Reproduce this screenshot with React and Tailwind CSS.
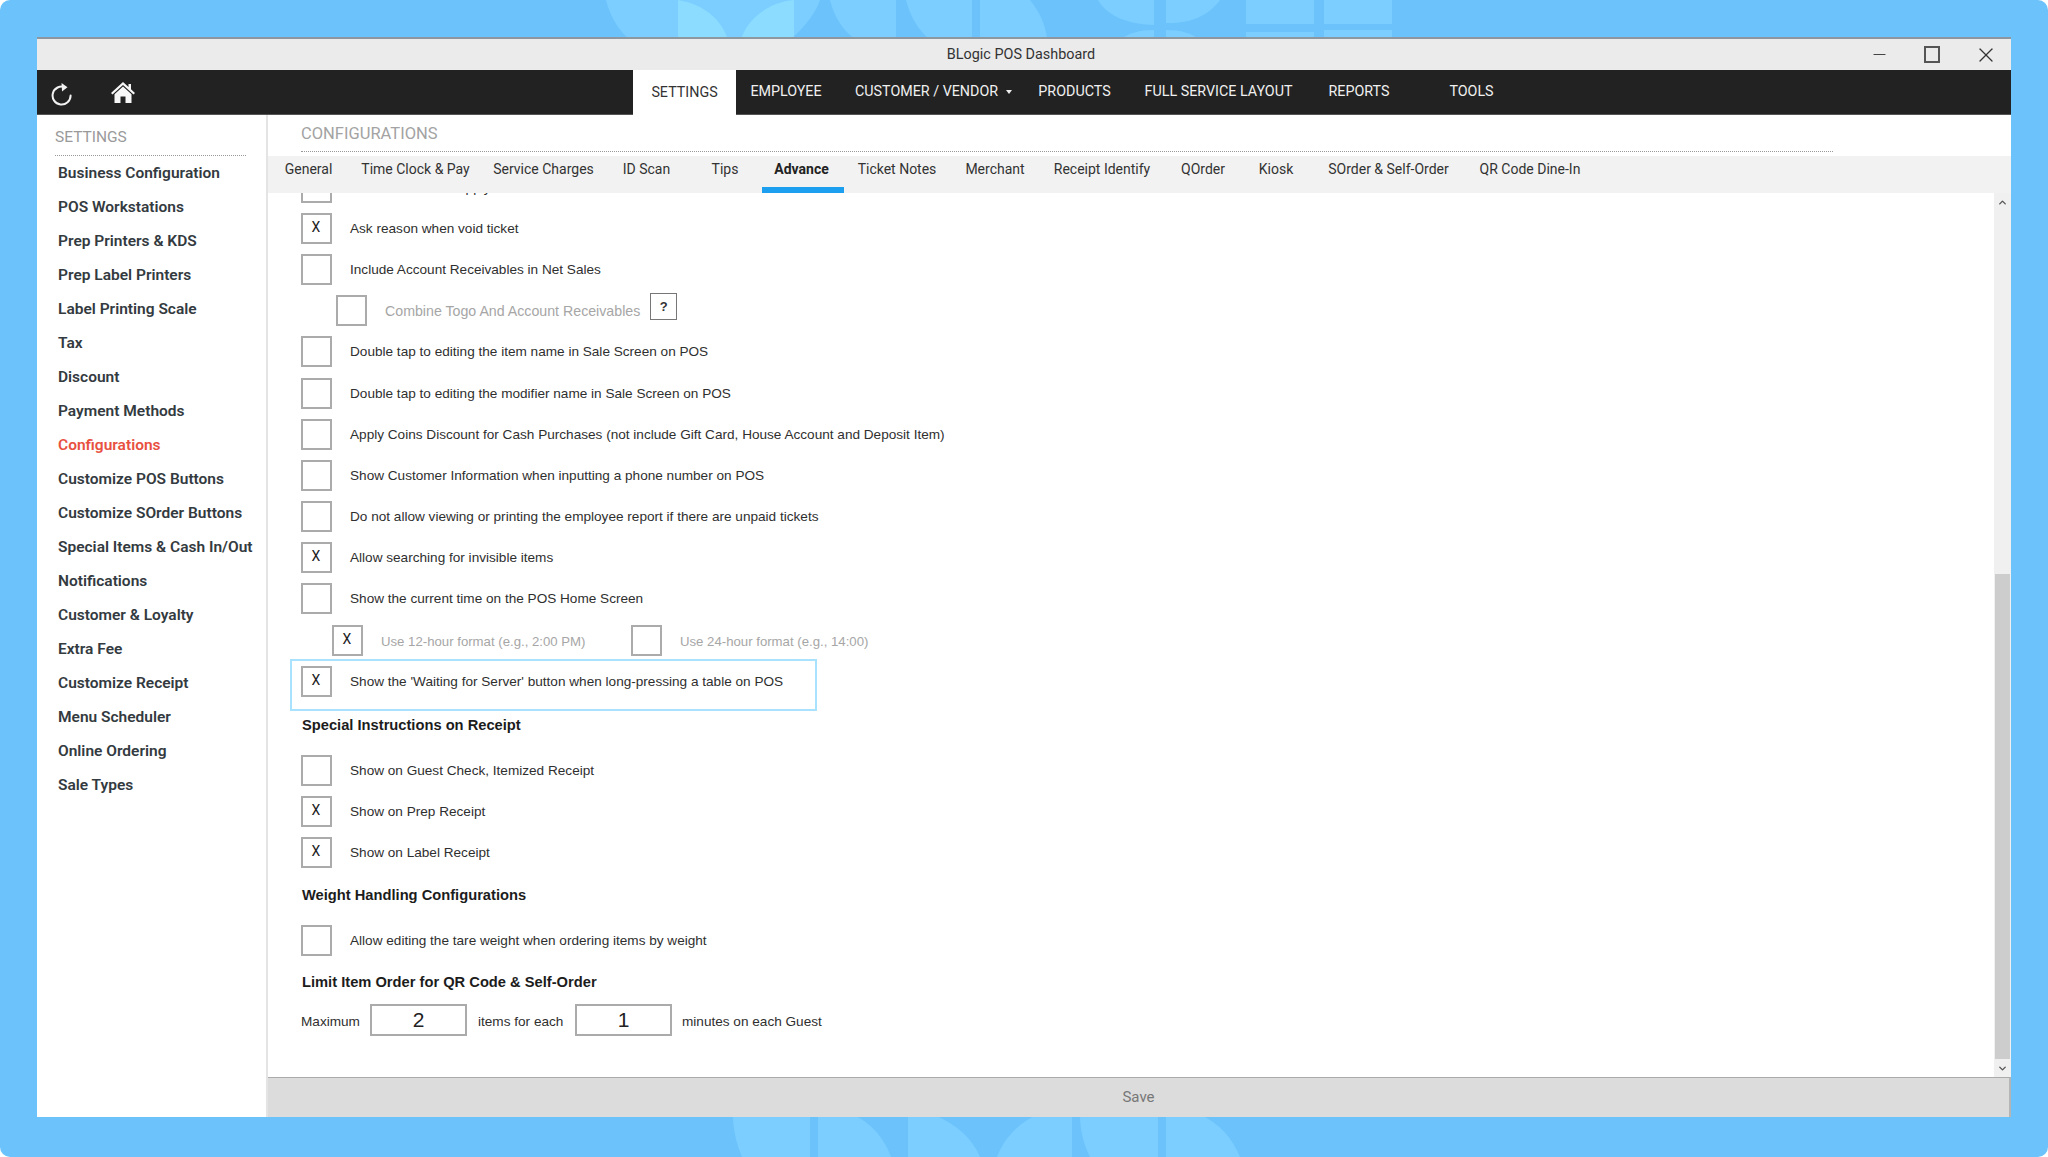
import React from "react";
import { ChevronUp, ChevronDown, Minus, X } from "lucide-react";

const navItems = [
  { label: "EMPLOYEE", cls: "w-[100px] justify-center" },
  { label: "CUSTOMER / VENDOR", cls: "w-[184px] pl-[19px]", caret: true },
  { label: "PRODUCTS", cls: "w-[109px] justify-center" },
  { label: "FULL SERVICE LAYOUT", cls: "w-[179px] justify-center" },
  { label: "REPORTS", cls: "w-[102px] justify-center" },
  { label: "TOOLS", cls: "w-[123px] justify-center" },
];

const sideItems = [
  "Business Configuration",
  "POS Workstations",
  "Prep Printers & KDS",
  "Prep Label Printers",
  "Label Printing Scale",
  "Tax",
  "Discount",
  "Payment Methods",
  "Configurations",
  "Customize POS Buttons",
  "Customize SOrder Buttons",
  "Special Items & Cash In/Out",
  "Notifications",
  "Customer & Loyalty",
  "Extra Fee",
  "Customize Receipt",
  "Menu Scheduler",
  "Online Ordering",
  "Sale Types",
];

const tabs = [
  { label: "General", cls: "w-[81px]" },
  { label: "Time Clock & Pay", cls: "w-[133px]" },
  { label: "Service Charges", cls: "w-[123px]" },
  { label: "ID Scan", cls: "w-[83px]" },
  { label: "Tips", cls: "w-[74px]" },
  { label: "Advance", cls: "w-[82px] pr-[3px]", active: true },
  { label: "Ticket Notes", cls: "w-[106px]" },
  { label: "Merchant", cls: "w-[90px]" },
  { label: "Receipt Identify", cls: "w-[124px]" },
  { label: "QOrder", cls: "w-[78px]" },
  { label: "Kiosk", cls: "w-[68px]" },
  { label: "SOrder & Self-Order", cls: "w-[157px]" },
  { label: "QR Code Dine-In", cls: "w-[126px]" },
];

const Box = ({ checked }) => (
  <div className="w-[31px] h-[31px] shrink-0 border-2 border-[#ababab] bg-white flex items-center justify-center text-[14px] text-[#222] pr-[1px] pb-[2px] font-['Roboto',sans-serif]">
    {checked ? "X" : ""}
  </div>
);

const Row = ({ checked, label }) => (
  <div className="h-[41.2px] flex items-start">
    <Box checked={checked} />
    <span className="ml-[18px] mt-[7px] leading-[18px] text-[13.6px] text-[#2f2f2f]">{label}</span>
  </div>
);

const Heading = ({ cls, children }) => (
  <div className={`flex items-center pl-[1px] font-bold text-[14.7px] text-[#1c1c1c] ${cls}`}>{children}</div>
);

const rows1 = [
  ["Ask reason when void ticket", true],
  ["Include Account Receivables in Net Sales", false],
];

const rows2 = [
  ["Double tap to editing the item name in Sale Screen on POS", false],
  ["Double tap to editing the modifier name in Sale Screen on POS", false],
  ["Apply Coins Discount for Cash Purchases (not include Gift Card, House Account and Deposit Item)", false],
  ["Show Customer Information when inputting a phone number on POS", false],
  ["Do not allow viewing or printing the employee report if there are unpaid tickets", false],
  ["Allow searching for invisible items", true],
  ["Show the current time on the POS Home Screen", false],
];

const Backdrop = () => (
  <svg className="absolute inset-0" width="2048" height="1157" viewBox="0 0 2048 1157">
    <g fill="#7bceff">
      <path d="M606 0C610 16 618 30 630 40H790C806 26 816 12 820 0Z" />
      <path d="M830 0C834 16 842 30 856 40H896V0Z" />
      <path d="M906 0C910 16 918 30 930 40H972V0Z" />
      <path d="M980 0V40H1047C1046 24 1038 10 1030 0Z" />
      <path d="M1098 0C1106 14 1124 24 1154 25V0Z" />
      <path d="M1166 0V23C1192 24 1210 14 1220 0Z" />
      <path d="M1120 40C1128 33 1140 30 1154 30V40Z" />
      <path d="M1166 30C1180 30 1192 33 1200 40H1166Z" />
      <rect x="1246" y="0" width="68" height="24" />
      <rect x="1324" y="0" width="68" height="24" />
      <rect x="1246" y="32" width="68" height="8" />
      <rect x="1324" y="30" width="68" height="10" />
      <path d="M733 1115C733 1130 737 1145 742 1157H810V1115Z" />
      <path d="M818 1115V1157H891C884 1138 872 1124 854 1115Z" />
      <path d="M908 1115V1157H980C972 1138 956 1124 934 1115Z" />
      <path d="M997 1157C1004 1138 1018 1124 1036 1115H1072V1157Z" />
      <path d="M1080 1115C1080 1130 1084 1145 1090 1157H1158V1115Z" />
      <path d="M1166 1115V1157H1240C1232 1138 1220 1124 1201 1115Z" />
    </g>
    <g fill="#8bdcff">
      <path d="M678 0C704 4 722 20 728 40H678Z" />
      <path d="M741 40C746 20 768 2 794 0V40Z" />
    </g>
  </svg>
);

const App = () => {
  return (
    <div className="bg-white w-[2048px] h-[1157px] overflow-hidden font-['Liberation_Sans',Arial,sans-serif]">
      <div className="relative w-[2048px] h-[1157px] rounded-[10px] bg-[#6cc3fb] overflow-hidden pt-[37px] px-[37px]">
        <Backdrop />

        <div className="relative w-[1974px] h-[1080px] bg-white flex flex-col border-t-2 border-[#8d979f]">
          {/* Title bar */}
          <div className="h-[31px] shrink-0 bg-[#ebebeb] flex items-center font-['Roboto',sans-serif]">
            <div className="ml-[907px] w-[154px] text-center text-[14.4px] text-[#333]">BLogic POS Dashboard</div>
            <Minus size={19} strokeWidth={1.4} className="ml-[772px] text-[#444]" />
            <div className="ml-[35px] w-[16px] h-[17px] border-2 border-[#555]" />
            <X size={24} strokeWidth={1.3} className="ml-[34px] text-[#333]" />
          </div>

          {/* Top menu */}
          <div className="h-[45px] shrink-0 bg-[#222222] border-b border-[#555] flex font-['Roboto',sans-serif] text-[14.3px] text-[#f0f0f0]">
            <svg className="ml-[14px] mt-[12px]" width="22" height="24" viewBox="0 0 22 24" fill="none">
              <path d="M14 5.2A9 9 0 1 0 19.6 13.5" stroke="#f2f2f2" strokeWidth="2" strokeLinecap="round" />
              <path d="M10.5 1L16.5 5.2L11 9.5Z" fill="#f2f2f2" />
            </svg>
            <svg className="ml-[38px] mt-[12px]" width="24" height="22" viewBox="0 0 24 22">
              <path d="M12 0L0 11L1.5 12.5L12 3L22.5 12.5L24 11L20 7.3V2H17.5V5L12 0Z" fill="#f7f7f7" />
              <path d="M12 4.5L3.5 12.2V21H9.5V14.5H14.5V21H20.5V12.2Z" fill="#f7f7f7" />
            </svg>
            <div className="ml-[498px] w-[103px] h-[45px] bg-white text-[#333] flex items-center justify-center">SETTINGS</div>
            {navItems.map((item) => (
              <div key={item.label} className={`flex items-center ${item.cls}`}>
                {item.label}
                {item.caret && <span className="ml-[8px] border-x-[3.5px] border-t-[4px] border-x-transparent border-t-[#eee]" />}
              </div>
            ))}
          </div>

          <div className="flex-1 flex min-h-0">
            {/* Sidebar */}
            <aside className="w-[231px] shrink-0 border-r-2 border-[#e4e4e4] font-['Roboto',sans-serif]">
              <div className="ml-[18px] mr-[20px] h-[41px] pt-[12px] border-b border-dotted border-[#999] text-[15.5px] leading-[20px] text-[#9a9a9a]">SETTINGS</div>
              <div className="pl-[21px] pt-[1px]">
                {sideItems.map((name) => (
                  <div
                    key={name}
                    className={`h-[34px] flex items-center text-[15.5px] font-semibold ${name === "Configurations" ? "text-[#e8503f]" : "text-[#333a40]"}`}
                  >
                    {name}
                  </div>
                ))}
              </div>
            </aside>

            {/* Main */}
            <main className="flex-1 min-w-0 flex flex-col">
              <div className="h-[41px] shrink-0 pl-[33px] font-['Roboto',sans-serif]">
                <div className="w-[1532px] h-[37px] pt-[9px] border-b border-dotted border-[#999] text-[16.5px] leading-[20px] text-[#a3a3a3]">CONFIGURATIONS</div>
              </div>

              <div className="h-[37px] shrink-0 bg-[#f2f2f2] flex font-['Roboto',sans-serif] text-[14px]">
                {tabs.map((t) => (
                  <div
                    key={t.label}
                    className={`${t.cls} h-[37px] flex items-center justify-center pb-[4px] border-b-[6px] ${t.active ? "border-[#1c9fee] font-bold text-[#222]" : "border-transparent text-[#333]"}`}
                  >
                    {t.label}
                  </div>
                ))}
              </div>

              <div className="flex-1 min-h-0 flex">
                <div className="flex-1 min-w-0 overflow-hidden pl-[33px]">
                  <div className="-mt-[21.4px]">
                    <Row label="Ask reason when apply discount" />
                    {rows1.map(([label, checked]) => (
                      <Row key={label} label={label} checked={checked} />
                    ))}
                    <div className="h-[41.2px] flex items-start pl-[35px] relative">
                      <Box />
                      <span className="ml-[18px] mt-[7px] leading-[18px] text-[14.2px] text-[#a6a6a6]">Combine Togo And Account Receivables</span>
                      <div className="ml-[10px] -mt-[2px] w-[27px] h-[27px] border border-[#777] flex items-center justify-center text-[13px] font-bold text-[#333]">?</div>
                    </div>
                    {rows2.map(([label, checked]) => (
                      <Row key={label} label={label} checked={checked} />
                    ))}

                    <div className="h-[34.2px] flex items-start pl-[31px]">
                      <Box checked />
                      <span className="w-[250px] ml-[18px] mt-[8px] leading-[18px] text-[13.2px] text-[#a6a6a6]">Use 12-hour format (e.g., 2:00 PM)</span>
                      <Box />
                      <span className="ml-[18px] mt-[8px] leading-[18px] text-[13.2px] text-[#a6a6a6]">Use 24-hour format (e.g., 14:00)</span>
                    </div>

                    <div className="-ml-[11px] w-[527px] h-[52px] border-2 border-[#a9e2ff] pt-[5px] pl-[9px] flex items-start">
                      <Box checked />
                      <span className="ml-[18px] mt-[7px] leading-[18px] text-[13.6px] text-[#2f2f2f]">Show the 'Waiting for Server' button when long-pressing a table on POS</span>
                    </div>

                    <Heading cls="h-[29px]">Special Instructions on Receipt</Heading>
                    <div className="pt-[15px]">
                      <Row label="Show on Guest Check, Itemized Receipt" />
                      <Row label="Show on Prep Receipt" checked />
                      <Row label="Show on Label Receipt" checked />
                    </div>

                    <Heading cls="h-[33px]">Weight Handling Configurations</Heading>
                    <div className="pt-[14px]">
                      <Row label="Allow editing the tare weight when ordering items by weight" />
                    </div>

                    <Heading cls="h-[30px]">Limit Item Order for QR Code &amp; Self-Order</Heading>
                    <div className="mt-[7px] flex items-center text-[13.6px] text-[#2f2f2f]">
                      <span className="w-[69px] pt-[6px]">Maximum</span>
                      <div className="w-[97px] h-[32px] border-2 border-[#ababab] flex items-center justify-center text-[21px] text-[#222]">2</div>
                      <span className="w-[108px] pl-[11px] pt-[6px]">items for each</span>
                      <div className="w-[97px] h-[32px] border-2 border-[#ababab] flex items-center justify-center text-[21px] text-[#222]">1</div>
                      <span className="ml-[10px] pt-[6px]">minutes on each Guest</span>
                    </div>
                  </div>
                </div>

                {/* Scrollbar */}
                <div className="w-[17px] shrink-0 bg-[#f0f0f0] flex flex-col items-center">
                  <div className="h-[18px] flex items-center"><ChevronUp size={11} strokeWidth={3} className="text-[#555]" /></div>
                  <div className="h-[363px]" />
                  <div className="w-[15px] flex-1 bg-[#cdcdcd]" />
                  <div className="h-[18px] flex items-center"><ChevronDown size={11} strokeWidth={3} className="text-[#555]" /></div>
                </div>
              </div>

              <div className="h-[40px] shrink-0 bg-[#dcdcdc] border-t border-[#ababab] border-r-2 border-r-[#b5b5b5] flex items-center justify-center text-[15px] text-[#777] font-['Roboto',sans-serif]">
                Save
              </div>
            </main>
          </div>
        </div>
      </div>
    </div>
  );
};

export default App;
